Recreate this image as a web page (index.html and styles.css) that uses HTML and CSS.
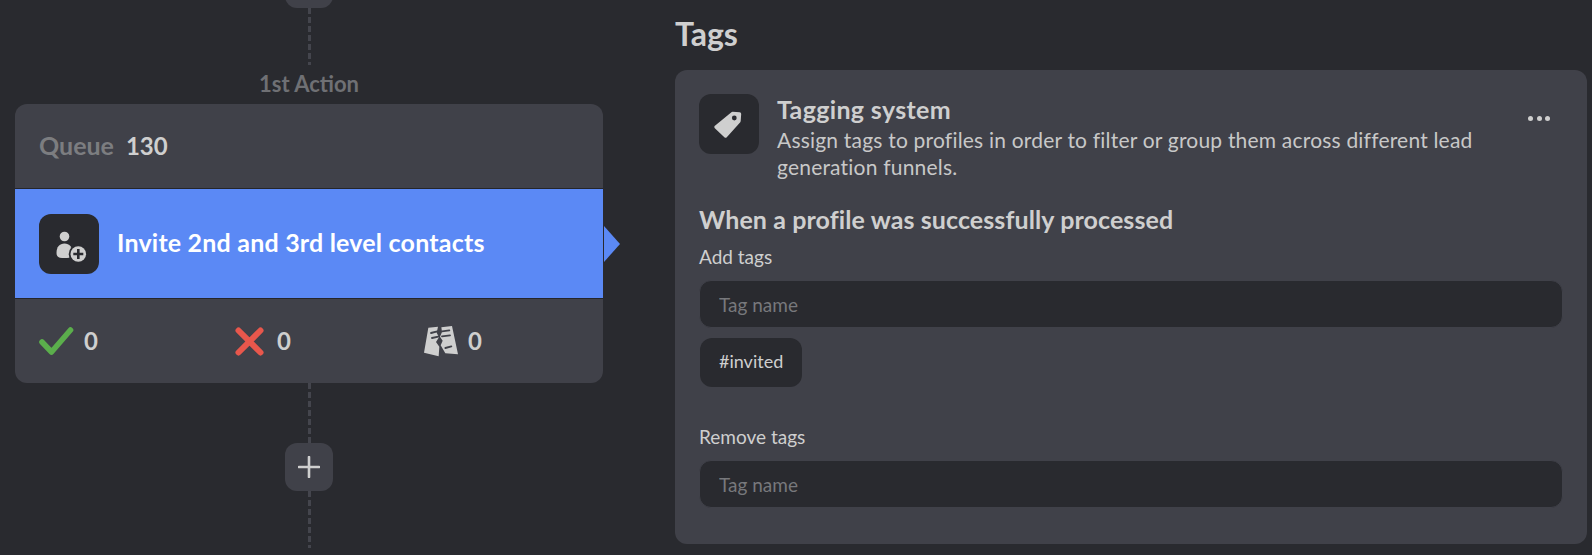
FILE: index.html
```html
<!DOCTYPE html>
<html lang="en">
<head>
    <meta charset="UTF-8">
    <meta name="viewport" content="width=device-width, initial-scale=1.0">
    <link rel="stylesheet" href="styles.css">
</head>
<body>
<div class="page">
    <div class="flow">
        <button class="add-button add-button-top"><svg width="22" height="22" viewBox="0 0 22 22"><path d="M11 1V21M1 11H21" stroke="#cfcfcf" stroke-width="2.6" stroke-linecap="round"/></svg></button>
        <div class="dash dash-top"></div>
        <div class="step-label">1st Action</div>
        <div class="action-card">
            <div class="queue-row">
                <span class="queue-label">Queue</span>
                <span class="queue-count">130</span>
            </div>
            <div class="action-row">
                <div class="icon-box">
                    <svg width="60" height="60" viewBox="0 0 60 60">
                        <circle cx="25.5" cy="22.5" r="4.8" fill="#cfcfcf"/>
                        <path d="M17.5 39C17.5 33 20.5 29.5 25.5 29.5C30.5 29.5 33.5 33 33.5 39C33.5 42.5 31.5 44 28 44H23C19.5 44 17.5 42.5 17.5 39Z" fill="#cfcfcf"/>
                        <circle cx="39.3" cy="40" r="9.6" fill="#292a2f"/>
                        <circle cx="39.3" cy="40" r="7.8" fill="#cfcfcf"/>
                        <path d="M39.3 35V45M34.3 40H44.3" stroke="#292a2f" stroke-width="2.6"/>
                    </svg>
                </div>
                <span class="action-name">Invite 2nd and 3rd level contacts</span>
            </div>
            <div class="stats-row">
                <div class="stat">
                    <svg width="35" height="29" viewBox="0 0 35 29"><path d="M3 15L12.5 25L31.5 3" fill="none" stroke="#5bae4c" stroke-width="5.6" stroke-linecap="round" stroke-linejoin="round"/></svg>
                    <span>0</span>
                </div>
                <div class="stat">
                    <svg class="stat-cross" width="29" height="29" viewBox="0 0 29 29"><path d="M3.5 3.5L25.5 25.5M25.5 3.5L3.5 25.5" fill="none" stroke="#e8574c" stroke-width="6" stroke-linecap="round"/></svg>
                    <span>0</span>
                </div>
                <div class="stat">
                    <svg width="34" height="31" viewBox="12 10 102 93">
                        <path d="M25 15L54 12L50 30L57 44L48 58L58 72L56 101L12 90Z" fill="#cfcfcf"/>
                        <path d="M64 14L96 10L114 95L76 92L62 68L68 54L60 42L66 28Z" fill="#cfcfcf"/>
                        <path d="M33 31L52 26M36 46L55 42M66 26L88 23M66 41L90 38M76 76L94 71" stroke="#404149" stroke-width="5.5" stroke-linecap="round"/>
                    </svg>
                    <span>0</span>
                </div>
            </div>
            <div class="arrow"></div>
        </div>
        <div class="dash dash-mid"></div>
        <button class="add-button"><svg width="22" height="22" viewBox="0 0 22 22"><path d="M11 1V21M1 11H21" stroke="#cfcfcf" stroke-width="2.6" stroke-linecap="round"/></svg></button>
        <div class="dash dash-bottom"></div>
    </div>

    <div class="settings">
        <h2 class="settings-title">Tags</h2>
        <div class="tag-card">
            <div class="tag-head">
                <div class="icon-box">
                    <svg width="60" height="60" viewBox="0 0 60 60">
                        <path d="M17 33L33.5 19.5L40.5 20L40 27L26.5 42Z" fill="#cfcfcf" stroke="#cfcfcf" stroke-width="3.4" stroke-linejoin="round"/>
                        <circle cx="35.3" cy="24" r="2.4" fill="#292a2f"/>
                    </svg>
                </div>
                <div class="tag-intro">
                    <h3>Tagging system</h3>
                    <p>Assign tags to profiles in order to filter or group them across different lead generation funnels.</p>
                </div>
                <div class="dots"><i></i><i></i><i></i></div>
            </div>
            <h4 class="tag-section">When a profile was successfully processed</h4>
            <label class="field-label" for="addTags">Add tags</label>
            <input type="text" id="addTags" class="tag-input" placeholder="Tag name">
            <div class="chip">#invited</div>
            <label class="field-label field-remove" for="removeTags">Remove tags</label>
            <input type="text" id="removeTags" class="tag-input" placeholder="Tag name">
        </div>
    </div>
</div>
</body>
</html>
```

FILE: styles.css
```css
html, body {
    height: 100%;
}

body {
    margin: 0;
    background-color: #292a2f;
    color: #cfcfcf;
    font-family: Lato, "Noto Sans", sans-serif;
    overflow: hidden;
}

.page {
    display: flex;
    align-items: flex-start;
    gap: 72px;
    padding-left: 15px;
    height: 555px;
    overflow: hidden;
}

/* left column */
.flow {
    width: 588px;
    flex-shrink: 0;
    display: flex;
    flex-direction: column;
    align-items: center;
}

.add-button {
    width: 48px;
    height: 48px;
    padding: 0;
    border: none;
    border-radius: 12px;
    background-color: #404149;
    display: flex;
    justify-content: center;
    align-items: center;
}

.add-button-top {
    margin-top: -40px;
}

.dash {
    width: 3px;
    background-image: repeating-linear-gradient(to bottom, #44454d 0, #44454d 6px, transparent 6px, transparent 9px);
}

.dash-top {
    height: 57px;
}

.dash-mid {
    height: 60px;
}

.dash-bottom {
    height: 57px;
}

.step-label {
    height: 39px;
    line-height: 37px;
    font-size: 22px;
    font-weight: 700;
    color: #6f7074;
}

.action-card {
    position: relative;
    width: 100%;
    border-radius: 12px;
    background-color: #404149;
}

.queue-row {
    height: 84px;
    box-sizing: border-box;
    padding: 0 0 2px 24px;
    display: flex;
    align-items: center;
    gap: 12px;
    font-weight: 700;
}

.queue-label {
    font-size: 25px;
    color: #7c7d80;
}

.queue-count {
    font-size: 24px;
}

.action-row {
    height: 109px;
    padding-left: 24px;
    display: flex;
    align-items: center;
    gap: 18px;
    background-color: #5b89f5;
    border-top: 1px solid #25262b;
    border-bottom: 1px solid #25262b;
}

.action-name {
    padding-bottom: 4px;
    font-size: 25px;
    letter-spacing: 0.2px;
    font-weight: 700;
    color: #fff;
}

.icon-box {
    width: 60px;
    height: 60px;
    flex-shrink: 0;
    border-radius: 12px;
    background-color: #292a2f;
}

.icon-box svg {
    display: block;
}

.stats-row {
    height: 84px;
    padding-left: 24px;
    display: grid;
    grid-template-columns: 196px 189px 1fr;
    align-items: center;
}

.stat {
    display: flex;
    align-items: center;
    gap: 10px;
    font-size: 24px;
    font-weight: 700;
}

.stat span {
    padding-bottom: 2px;
}

.stat-cross {
    margin-right: 3px;
}

.arrow {
    position: absolute;
    top: 122px;
    left: calc(100% + 1px);
    width: 0;
    height: 0;
    border-top: 18px solid transparent;
    border-bottom: 18px solid transparent;
    border-left: 16px solid #5b89f5;
}

/* right column */
.settings {
    width: 912px;
    flex-shrink: 0;
}

.settings-title {
    margin: 0;
    height: 70px;
    line-height: 68px;
    font-size: 32px;
    font-weight: 700;
}

.tag-card {
    height: 474px;
    box-sizing: border-box;
    padding: 24px 24px 0;
    border-radius: 12px;
    background-color: #404149;
}

.tag-head {
    display: flex;
    gap: 18px;
}

.tag-intro {
    flex: 1;
}

.tag-intro h3 {
    margin: 0;
    font-size: 25px;
    letter-spacing: 0.35px;
    line-height: 31px;
    font-weight: 700;
}

.tag-intro p {
    margin: 1px 0 0;
    font-size: 21px;
    letter-spacing: 0.2px;
    line-height: 27px;
    color: #c8c8c8;
}

.dots {
    width: 22px;
    margin: 22px 13px 0 0;
    display: flex;
    justify-content: space-between;
    align-self: flex-start;
}

.dots i {
    width: 5px;
    height: 5px;
    border-radius: 50%;
    background-color: #cfcfcf;
}

.tag-section {
    margin: 25px 0 0;
    font-size: 25px;
    letter-spacing: 0.1px;
    line-height: 28px;
    font-weight: 700;
}

.field-label {
    display: block;
    margin-top: 12px;
    margin-bottom: 11px;
    font-size: 19px;
    line-height: 24px;
}

.field-remove {
    margin-top: 38px;
}

.tag-input {
    display: block;
    width: 100%;
    height: 48px;
    box-sizing: border-box;
    padding: 0 19px;
    border: 1px solid #404149;
    border-radius: 12px;
    background-color: #292a2f;
    color: #cfcfcf;
    font-family: inherit;
    font-size: 19px;
    outline: none;
}

.tag-input::placeholder {
    color: #77787c;
}

.chip {
    display: inline-block;
    margin: 10px 0 0 1px;
    padding: 0 19px;
    height: 49px;
    line-height: 47px;
    border-radius: 12px;
    background-color: #292a2f;
    font-size: 18px;
}
```
